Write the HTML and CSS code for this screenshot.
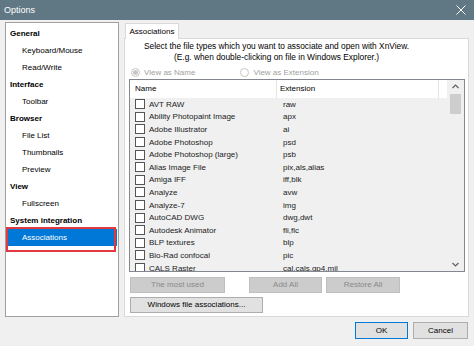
FILE: index.html
```html
<!DOCTYPE html>
<html>
<head>
<meta charset="utf-8">
<link rel="stylesheet" href="styles.css">
</head>
<body>
<div class="window">
  <div class="titlebar">
    <span class="title">Options</span>
    <svg class="close" width="10" height="10" viewBox="0 0 10 10"><path d="M0.5 0.5 L9.5 9.5 M9.5 0.5 L0.5 9.5" stroke="#fff" stroke-width="1" fill="none"/></svg>
  </div>
  <div class="main">
    <div class="tree">
      <div class="node group">General</div>
      <div class="node leaf">Keyboard/Mouse</div>
      <div class="node leaf">Read/Write</div>
      <div class="node group">Interface</div>
      <div class="node leaf">Toolbar</div>
      <div class="node group">Browser</div>
      <div class="node leaf">File List</div>
      <div class="node leaf">Thumbnails</div>
      <div class="node leaf">Preview</div>
      <div class="node group">View</div>
      <div class="node leaf">Fullscreen</div>
      <div class="node group">System integration</div>
      <div class="node leaf selected">Associations</div>
    </div>
    <div class="tabs">
      <div class="tabstrip"><div class="tab">Associations</div></div>
      <div class="panel">
        <div class="intro">Select the file types which you want to associate and open with XnView.<br>(E.g. when double-clicking on file in Windows Explorer.)</div>
        <div class="radios">
          <div class="radio"><span class="ring checked"></span>View as Name</div>
          <div class="radio second"><span class="ring"></span>View as Extension</div>
        </div>
        <div class="list">
          <div class="list-main">
            <div class="list-head">
              <div class="col-name">Name</div>
              <div class="col-ext">Extension</div>
              <div class="col-fill"></div>
            </div>
            <div class="rows">
              <div class="row"><span class="cb"></span><span class="name">AVT RAW</span><span class="ext">raw</span></div>
              <div class="row"><span class="cb"></span><span class="name">Ability Photopaint Image</span><span class="ext">apx</span></div>
              <div class="row"><span class="cb"></span><span class="name">Adobe Illustrator</span><span class="ext">ai</span></div>
              <div class="row"><span class="cb"></span><span class="name">Adobe Photoshop</span><span class="ext">psd</span></div>
              <div class="row"><span class="cb"></span><span class="name">Adobe Photoshop (large)</span><span class="ext">psb</span></div>
              <div class="row"><span class="cb"></span><span class="name">Alias Image File</span><span class="ext">pix,als,alias</span></div>
              <div class="row"><span class="cb"></span><span class="name">Amiga IFF</span><span class="ext">iff,blk</span></div>
              <div class="row"><span class="cb"></span><span class="name">Analyze</span><span class="ext">avw</span></div>
              <div class="row"><span class="cb"></span><span class="name">Analyze-7</span><span class="ext">img</span></div>
              <div class="row"><span class="cb"></span><span class="name">AutoCAD DWG</span><span class="ext">dwg,dwt</span></div>
              <div class="row"><span class="cb"></span><span class="name">Autodesk Animator</span><span class="ext">fli,flc</span></div>
              <div class="row"><span class="cb"></span><span class="name">BLP textures</span><span class="ext">blp</span></div>
              <div class="row"><span class="cb"></span><span class="name">Bio-Rad confocal</span><span class="ext">pic</span></div>
              <div class="row"><span class="cb"></span><span class="name">CALS Raster</span><span class="ext">cal,cals,gp4,mil</span></div>
            </div>
          </div>
          <div class="scrollbar">
            <svg class="arrow" width="7" height="5" viewBox="0 0 7 5"><path d="M0.5 4 L3.5 1 L6.5 4" stroke="#606060" stroke-width="1.2" fill="none"/></svg>
            <div class="track"><div class="thumb"></div></div>
            <svg class="arrow" width="7" height="5" viewBox="0 0 7 5"><path d="M0.5 1 L3.5 4 L6.5 1" stroke="#606060" stroke-width="1.2" fill="none"/></svg>
          </div>
        </div>
        <div class="btnrow">
          <div class="btn disabled most">The most used</div>
          <div class="btn disabled add">Add All</div>
          <div class="btn disabled restore">Restore All</div>
        </div>
        <div class="btnrow2">
          <div class="btn winassoc">Windows file associations...</div>
        </div>
      </div>
    </div>
  </div>
  <div class="footer">
    <div class="btn ok">OK</div>
    <div class="btn cancel">Cancel</div>
  </div>
</div>
</body>
</html>
```
FILE: styles.css
```css
* { box-sizing: border-box; }
html, body { margin: 0; padding: 0; }
body {
  width: 474px;
  height: 346px;
  overflow: hidden;
  background: #f0f0f0;
  font-family: "Liberation Sans", Arial, sans-serif;
  font-size: 8px;
  color: #000;
}
.window { width: 474px; height: 346px; display: flex; flex-direction: column; }
.titlebar {
  height: 20px;
  background: #5f7884;
  display: flex;
  align-items: center;
  justify-content: space-between;
  padding: 0 8px 0 4px;
  flex: none;
}
.title { color: #fff; font-size: 9px; }
.close { display: block; }
.main {
  display: flex;
  gap: 5px;
  padding: 0 5px;
  margin-top: 2px;
  height: 295px;
  flex: none;
}
.tree {
  width: 114px;
  background: #fff;
  border: 1px solid #a0a0a0;
  padding-top: 1.5px;
}
.node {
  height: 17px;
  line-height: 17px;
  white-space: nowrap;
}
.group { font-weight: bold; padding-left: 4px; }
.leaf { padding-left: 16px; }
.selected {
  position: relative;
  background: #0078d7;
  color: #fff;
  margin-right: 1px;
}
.selected::after {
  content: "";
  position: absolute;
  left: 0;
  top: -2px;
  width: 106px;
  height: 21px;
  border: 2px solid #e2383f;
}
.tabs { flex: 1; display: flex; flex-direction: column; }
.tabstrip { height: 16px; display: flex; padding-left: 1px; flex: none; }
.tab {
  width: 54px;
  background: #fff;
  border: 1px solid #d9d9d9;
  border-bottom: none;
  text-align: center;
  line-height: 15px;
  position: relative;
  top: 1px;
}
.panel {
  flex: 1;
  background: #fff;
  border: 1px solid #d9d9d9;
  padding: 2px 0 0 4px;
}
.intro {
  width: 295px;
  text-align: center;
  line-height: 11px;
  font-size: 8.35px;
}
.radios {
  display: flex;
  height: 10px;
  margin-top: 4.5px;
  align-items: center;
  color: #a0a0a0;
}
.radio { display: flex; align-items: center; gap: 4px; padding-left: 2px; }
.radio.second { margin-left: 43px; }
.ring {
  width: 9px;
  height: 9px;
  border: 1px solid #c6c6c6;
  border-radius: 50%;
  display: flex;
  align-items: center;
  justify-content: center;
}
.ring.checked::after {
  content: "";
  width: 5px;
  height: 5px;
  border-radius: 50%;
  background: #c6c6c6;
}
.list {
  width: 336px;
  height: 193px;
  margin-top: 1px;
  border: 1px solid #828790;
  display: flex;
  background: #f0f0f0;
}
.list-main { flex: 1; display: flex; flex-direction: column; overflow: hidden; }
.list-head {
  height: 18px;
  background: #fff;
  display: flex;
  flex: none;
  line-height: 18px;
}
.col-name { width: 147px; padding-left: 5px; border-right: 1px solid #e5e5e5; }
.col-ext { width: 162px; padding-left: 3px; border-right: 1px solid #e5e5e5; }
.col-fill { flex: 1; }
.rows { flex: 1; overflow: hidden; color: #222; padding-top: 0.5px; }
.row {
  height: 12.6px;
  display: flex;
  align-items: center;
  white-space: nowrap;
}
.cb {
  width: 10px;
  height: 10px;
  border: 1px solid #555;
  background: #fff;
  margin-left: 5px;
  flex: none;
}
.name { width: 132px; padding-left: 4px; }
.ext { padding-left: 6px; }
.scrollbar {
  width: 17px;
  flex: none;
  display: flex;
  flex-direction: column;
  align-items: center;
  background: #f0f0f0;
  padding: 4px 0;
}
.arrow { display: block; flex: none; }
.track { flex: 1; width: 100%; padding: 5px 3px 0 3px; }
.thumb { height: 20px; background: #cdcdcd; }
.btnrow { display: flex; margin-top: 5px; padding-left: 1px; }
.btnrow2 { display: flex; margin-top: 4px; padding-left: 1px; }
.btn {
  height: 16px;
  line-height: 14px;
  text-align: center;
  border: 1px solid #adadad;
  background: #e1e1e1;
  white-space: nowrap;
}
.btn.disabled { background: #cccccc; border-color: #bfbfbf; color: #8a8a8a; }
.most { width: 95px; }
.add { width: 73px; margin-left: 24px; }
.restore { width: 74px; margin-left: 4px; }
.winassoc { width: 133px; }
.footer {
  display: flex;
  justify-content: flex-end;
  gap: 5px;
  padding: 5px 6px 0 0;
}
.ok { width: 53px; height: 17px; line-height: 15px; border-color: #0078d7; }
.cancel { width: 55px; height: 17px; line-height: 15px; }
```
